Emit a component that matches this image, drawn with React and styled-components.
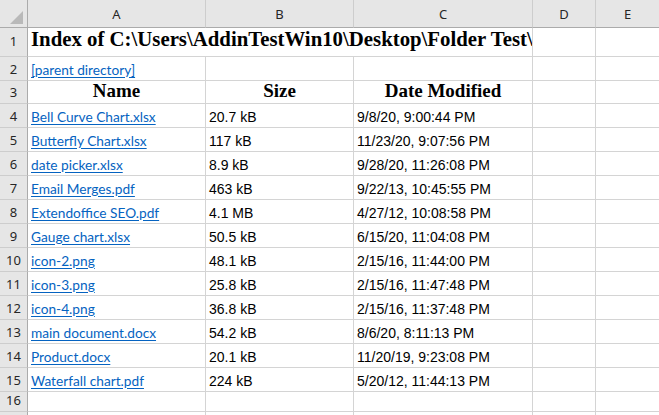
import React from 'react';
import styled, { createGlobalStyle } from 'styled-components';

const GlobalStyle = createGlobalStyle`
  html, body {
    margin: 0;
    padding: 0;
    background: #ffffff;
  }
`;

const files = [
  { name: 'Bell Curve Chart.xlsx', size: '20.7 kB', date: '9/8/20, 9:00:44 PM' },
  { name: 'Butterfly Chart.xlsx', size: '117 kB', date: '11/23/20, 9:07:56 PM' },
  { name: 'date picker.xlsx', size: '8.9 kB', date: '9/28/20, 11:26:08 PM' },
  { name: 'Email Merges.pdf', size: '463 kB', date: '9/22/13, 10:45:55 PM' },
  { name: 'Extendoffice SEO.pdf', size: '4.1 MB', date: '4/27/12, 10:08:58 PM' },
  { name: 'Gauge chart.xlsx', size: '50.5 kB', date: '6/15/20, 11:04:08 PM' },
  { name: 'icon-2.png', size: '48.1 kB', date: '2/15/16, 11:44:00 PM' },
  { name: 'icon-3.png', size: '25.8 kB', date: '2/15/16, 11:47:48 PM' },
  { name: 'icon-4.png', size: '36.8 kB', date: '2/15/16, 11:37:48 PM' },
  { name: 'main document.docx', size: '54.2 kB', date: '8/6/20, 8:11:13 PM' },
  { name: 'Product.docx', size: '20.1 kB', date: '11/20/19, 9:23:08 PM' },
  { name: 'Waterfall chart.pdf', size: '224 kB', date: '5/20/12, 11:44:13 PM' },
];

const columns = ['A', 'B', 'C', 'D', 'E'];

const SheetStyled = styled.div`
  width: 659px;
  height: 415px;
  overflow: hidden;
  display: grid;
  grid-template-columns: 28px 178px 148px 179px 63px 64px;
  grid-template-rows: 28px 29px 24px 23px repeat(12, 24px) 20px 24px;
  background: #ffffff;
`;

const CornerStyled = styled.div`
  background: #e6e6e6;
  border-right: 1px solid #ababab;
  border-bottom: 1px solid #ababab;
  box-sizing: border-box;
  display: flex;
  align-items: flex-end;
  justify-content: flex-end;
  padding: 0 4px 3px 0;
`;

const ColHeadStyled = styled.div`
  background: #e6e6e6;
  border-right: 1px solid #cdcdcd;
  border-bottom: 1px solid #ababab;
  box-sizing: border-box;
  display: flex;
  align-items: flex-end;
  justify-content: center;
  padding-bottom: 4px;
  font-family: 'Noto Sans', 'Liberation Sans', sans-serif;
  font-size: 13px;
  color: #262626;
`;

const RowHeadStyled = styled.div`
  background: #e6e6e6;
  border-right: 1px solid #ababab;
  border-bottom: 1px solid #cdcdcd;
  box-sizing: border-box;
  display: flex;
  align-items: flex-end;
  justify-content: center;
  padding-bottom: ${({ tall }) => (tall ? '6px' : '2px')};
  font-family: 'Noto Sans', 'Liberation Sans', sans-serif;
  font-size: 13px;
  color: #262626;
`;

// a merged cell (A1:C1) clips its own overflow, like Excel does
const CellStyled = styled.div`
  grid-column: span ${({ span }) => span || 1};
  border-right: 1px solid #d4d4d4;
  border-bottom: 1px solid #d4d4d4;
  box-sizing: border-box;
  display: flex;
  align-items: flex-end;
  justify-content: ${({ center }) => (center ? 'center' : 'flex-start')};
  padding: 0 ${({ span }) => (span ? 0 : 3)}px 2px 3px;
  white-space: nowrap;
  overflow: hidden;
  font-family: 'Liberation Sans', Arial, sans-serif;
  font-size: 14px;
  color: #000000;
`;

const TitleStyled = styled.span`
  flex-shrink: 0;
  font-family: 'Liberation Serif', 'Times New Roman', serif;
  font-weight: bold;
  font-size: 20.8px;
  line-height: 1;
  padding-bottom: 4px;
`;

const HeadingStyled = styled.span`
  font-family: 'Liberation Serif', 'Times New Roman', serif;
  font-weight: bold;
  font-size: 19px;
  line-height: 1;
  padding-bottom: 1px;
`;

const LinkStyled = styled.a`
  font-family: Lato, 'Open Sans', sans-serif;
  font-size: 13.7px;
  color: #0563c1;
  text-decoration: underline;
  text-underline-offset: 2px;
  line-height: 1.2;
  cursor: pointer;
`;

const Corner = () => (
  <CornerStyled>
    <svg width="13" height="13" viewBox="0 0 13 13">
      <polygon points="13,0 13,13 0,13" fill="#b9b9b9" />
    </svg>
  </CornerStyled>
);

const EmptyCells = ({ count }) =>
  Array.from({ length: count }).map((_, i) => <CellStyled key={i} />);

const App = () => (
  <>
    <GlobalStyle />
    <SheetStyled>
      <Corner />
      {columns.map((c) => (
        <ColHeadStyled key={c}>{c}</ColHeadStyled>
      ))}

      <RowHeadStyled tall>1</RowHeadStyled>
      <CellStyled span={3}>
        <TitleStyled>Index of C:\Users\AddinTestWin10\Desktop\Folder Test\</TitleStyled>
      </CellStyled>
      <EmptyCells count={2} />

      <RowHeadStyled>2</RowHeadStyled>
      <CellStyled>
        <LinkStyled>[parent directory]</LinkStyled>
      </CellStyled>
      <EmptyCells count={4} />

      <RowHeadStyled>3</RowHeadStyled>
      <CellStyled center>
        <HeadingStyled>Name</HeadingStyled>
      </CellStyled>
      <CellStyled center>
        <HeadingStyled>Size</HeadingStyled>
      </CellStyled>
      <CellStyled center>
        <HeadingStyled>Date Modified</HeadingStyled>
      </CellStyled>
      <EmptyCells count={2} />

      {files.map((f, i) => (
        <React.Fragment key={f.name}>
          <RowHeadStyled>{i + 4}</RowHeadStyled>
          <CellStyled>
            <LinkStyled>{f.name}</LinkStyled>
          </CellStyled>
          <CellStyled>{f.size}</CellStyled>
          <CellStyled>{f.date}</CellStyled>
          <EmptyCells count={2} />
        </React.Fragment>
      ))}

      <RowHeadStyled>16</RowHeadStyled>
      <EmptyCells count={5} />
      <RowHeadStyled />
      <EmptyCells count={5} />
    </SheetStyled>
  </>
);

export default App;
